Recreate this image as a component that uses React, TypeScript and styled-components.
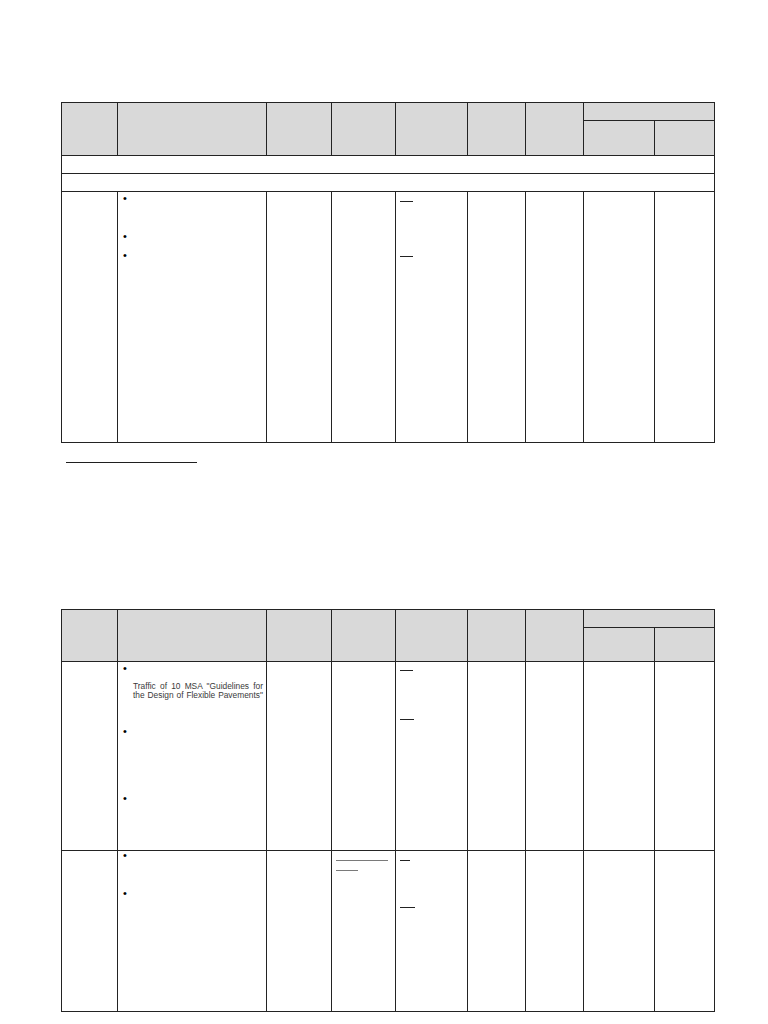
import React, { FunctionComponent } from 'react';
import styled, { createGlobalStyle } from 'styled-components';

const GlobalStyle = createGlobalStyle`
  html, body {
    margin: 0;
    padding: 0;
    background: #ffffff;
    font-family: 'Liberation Sans', Arial, sans-serif;
  }
`;

const Page = styled.div`
  width: 768px;
  min-height: 1024px;
  padding: 102px 0 0 61px;
  box-sizing: border-box;
`;

const Grid = styled.table`
  border-collapse: collapse;
  table-layout: fixed;
  width: 653px;
`;

const HeadRow = styled.tr<{ h: number }>`
  height: ${(p) => p.h}px;
`;

const BodyRow = styled.tr<{ h: number }>`
  height: ${(p) => p.h}px;
`;

const HeadCell = styled.th`
  background: #d9d9d9;
  border: 1px solid #232323;
  padding: 0;
`;

const Cell = styled.td`
  border: 1px solid #232323;
  padding: 0;
  vertical-align: top;
`;

const CellInner = styled.div`
  display: flex;
  flex-direction: column;
  align-items: flex-start;
  padding-left: 4px;
`;

const BulletInner = styled.div`
  display: flex;
  flex-direction: column;
  padding-left: 5px;
`;

const Bullet = styled.div<{ mt: number }>`
  margin-top: ${(p) => p.mt}px;
  height: 8px;
  line-height: 8px;
  font-size: 11px;
  color: #000;
`;

const Para = styled.p<{ mt: number }>`
  margin: ${(p) => p.mt}px 0 0 10px;
  width: 130px;
  font-size: 8.4px;
  line-height: 8.5px;
  color: #3a3a3a;
  text-align: justify;
  text-align-last: justify;
`;

const Dash = styled.div<{ mt: number; w: number; grey?: boolean }>`
  margin-top: ${(p) => p.mt}px;
  width: ${(p) => p.w}px;
  height: 0;
  border-top: ${(p) => (p.grey ? '1.5px solid #7a7a7a' : '1px solid #222')};
`;

const Rule = styled.div`
  margin: 19px 0 0 5px;
  width: 131px;
  border-top: 1.5px solid #1f1f1f;
`;

const Spacer = styled.div`
  height: 146px;
`;

const widths = [56, 149, 65, 64, 72, 58, 58, 71, 60];

const Cols: FunctionComponent = () => (
  <colgroup>
    {widths.map((w, i) => (
      <col key={i} style={{ width: w }} />
    ))}
  </colgroup>
);

const Head: FunctionComponent<{ top: number; bottom: number }> = ({ top, bottom }) => (
  <thead>
    <HeadRow h={top}>
      {[0, 1, 2, 3, 4, 5, 6].map((i) => (
        <HeadCell key={i} rowSpan={2} />
      ))}
      <HeadCell colSpan={2} />
    </HeadRow>
    <HeadRow h={bottom}>
      <HeadCell />
      <HeadCell />
    </HeadRow>
  </thead>
);

const Blank: FunctionComponent<{ n: number }> = ({ n }) => (
  <>
    {Array.from({ length: n }).map((_, i) => (
      <Cell key={i} />
    ))}
  </>
);

const App: FunctionComponent = () => (
  <Page>
    <GlobalStyle />
    <Grid>
      <Cols />
      <Head top={18} bottom={35} />
      <tbody>
        <BodyRow h={18}>
          <Cell colSpan={9} />
        </BodyRow>
        <BodyRow h={18}>
          <Cell colSpan={9} />
        </BodyRow>
        <BodyRow h={251}>
          <Cell />
          <Cell>
            <BulletInner>
              <Bullet mt={2}>•</Bullet>
              <Bullet mt={30}>•</Bullet>
              <Bullet mt={11}>•</Bullet>
            </BulletInner>
          </Cell>
          <Cell />
          <Cell />
          <Cell>
            <CellInner>
              <Dash mt={9} w={13} />
              <Dash mt={54} w={13} />
            </CellInner>
          </Cell>
          <Blank n={4} />
        </BodyRow>
      </tbody>
    </Grid>
    <Rule />
    <Spacer />
    <Grid>
      <Cols />
      <Head top={18} bottom={34} />
      <tbody>
        <BodyRow h={189}>
          <Cell />
          <Cell>
            <BulletInner>
              <Bullet mt={2}>•</Bullet>
              <Para mt={10}>Traffic of 10 MSA "Guidelines for the Design of Flexible Pavements"</Para>
              <Bullet mt={28}>•</Bullet>
              <Bullet mt={59}>•</Bullet>
            </BulletInner>
          </Cell>
          <Cell />
          <Cell />
          <Cell>
            <CellInner>
              <Dash mt={8} w={13} />
              <Dash mt={48} w={14} />
            </CellInner>
          </Cell>
          <Blank n={4} />
        </BodyRow>
        <BodyRow h={161}>
          <Cell />
          <Cell>
            <BulletInner>
              <Bullet mt={0}>•</Bullet>
              <Bullet mt={30}>•</Bullet>
            </BulletInner>
          </Cell>
          <Cell />
          <Cell>
            <CellInner>
              <Dash mt={9} w={52} grey />
              <Dash mt={9} w={22} grey />
            </CellInner>
          </Cell>
          <Cell>
            <CellInner>
              <Dash mt={9} w={10} />
              <Dash mt={46} w={15} />
            </CellInner>
          </Cell>
          <Blank n={4} />
        </BodyRow>
      </tbody>
    </Grid>
  </Page>
);

export default App;
